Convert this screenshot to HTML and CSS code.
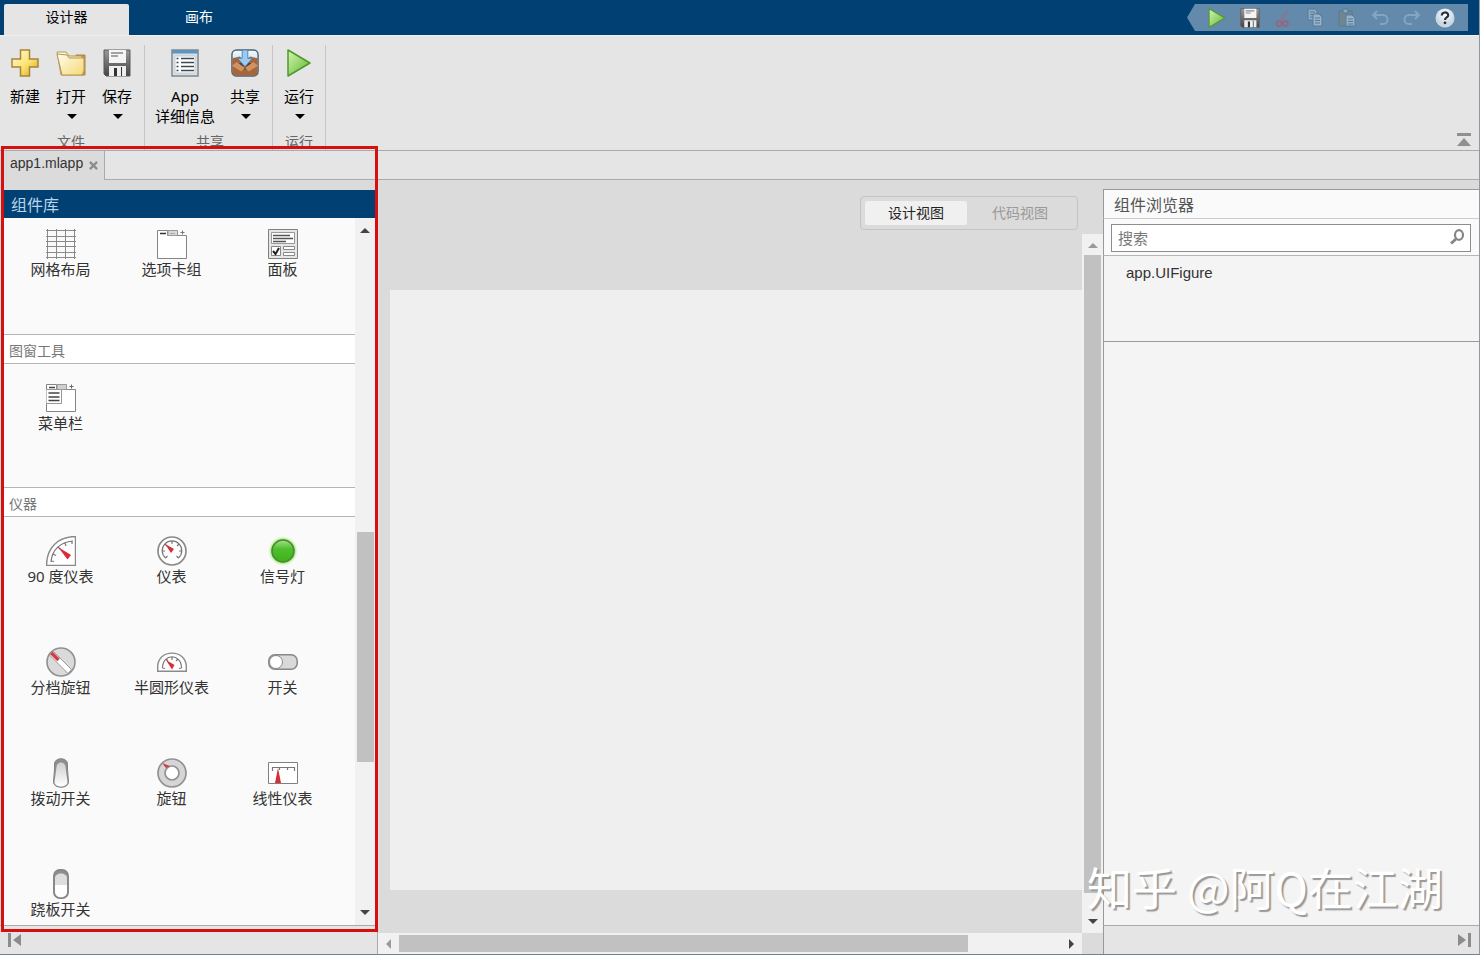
FILE: index.html
```html
<!DOCTYPE html>
<html lang="zh-CN">
<head>
<meta charset="utf-8">
<title>App 设计工具</title>
<link rel="stylesheet" href="styles.css">
</head>
<body>
<svg class="defs" aria-hidden="true">
  <defs>
    <linearGradient id="gold" x1="0" y1="0" x2="1" y2="1"><stop offset="0" stop-color="#fffbe0"/><stop offset=".55" stop-color="#fbe36e"/><stop offset="1" stop-color="#d9a01c"/></linearGradient>
    <linearGradient id="fold" x1="0" y1="0" x2="1" y2="1"><stop offset="0" stop-color="#fffdf0"/><stop offset="1" stop-color="#f5d874"/></linearGradient>
    <linearGradient id="play" x1="0" y1="0" x2="1" y2="1"><stop offset="0" stop-color="#d6f5b4"/><stop offset="1" stop-color="#5cb52a"/></linearGradient>
    <linearGradient id="disk" x1="0" y1="0" x2="0" y2="1"><stop offset="0" stop-color="#9a9a9a"/><stop offset="1" stop-color="#444444"/></linearGradient>
    <linearGradient id="sky" x1="0" y1="0" x2="0" y2="1"><stop offset="0" stop-color="#f4fbff"/><stop offset="1" stop-color="#8fc0e6"/></linearGradient>
    <linearGradient id="metal" x1="0" y1="0" x2="0" y2="1"><stop offset="0" stop-color="#cfcfcf"/><stop offset="1" stop-color="#ffffff"/></linearGradient>
    <linearGradient id="lamp" x1="0" y1="0" x2="0" y2="1"><stop offset="0" stop-color="#a5e08c"/><stop offset=".4" stop-color="#4fc02c"/><stop offset="1" stop-color="#3fb01c"/></linearGradient>
    <radialGradient id="glow"><stop offset=".75" stop-color="#8fe060"/><stop offset="1" stop-color="#d8f8c0" stop-opacity="0"/></radialGradient>
    <radialGradient id="orb" cx=".5" cy=".3"><stop offset="0" stop-color="#ffffff"/><stop offset="1" stop-color="#c9d8e4"/></radialGradient>
    <symbol id="i-play" viewBox="0 0 28 28"><path d="M3 1v26l22-13z" fill="url(#play)" stroke="#4d9a2c" stroke-width="1.5" stroke-linejoin="round"/></symbol>
    <symbol id="i-save" viewBox="0 0 28 28"><path d="M1 1h26v26H3l-2-2z" fill="url(#disk)" stroke="#5a5a5a"/><path d="M6 1h17v13H6z" fill="#f4f4f4"/><path d="M8 4h12M8 7h7" stroke="#888" stroke-width="1.5"/><path d="M6 17h17v10H6z" fill="#eee"/><path d="M11 19h3v8h-3zM18 18h1v9h-1z" fill="#333"/></symbol>
  </defs>
</svg>

<div class="app">
  <header class="titlebar">
    <nav class="main-tabs">
      <button class="main-tab active" type="button">设计器</button>
      <button class="main-tab" type="button">画布</button>
    </nav>
    <div class="quick">
      <button type="button" aria-label="运行"><svg viewBox="0 0 28 28"><use href="#i-play"/></svg></button>
      <button type="button" aria-label="保存"><svg viewBox="0 0 28 28"><use href="#i-save"/></svg></button>
      <button type="button" aria-label="剪切" disabled><svg viewBox="0 0 20 20" fill="none"><path d="M15.500 2L8.500 13M10.500 7l2.500 6" stroke="#8a7590" stroke-width="1.800"/><circle cx="7" cy="15.500" r="2.500" stroke="#96647c" stroke-width="1.700"/><circle cx="13.500" cy="15.500" r="2.500" stroke="#96647c" stroke-width="1.700"/></svg></button>
      <button type="button" aria-label="复制" disabled><svg viewBox="0 0 20 20"><path d="M3 1h7l2 2v9H3z" fill="#8dabc3" stroke="#557a9b"/><path d="M5 4h5M5 6.500h5M5 9h5" stroke="#557a9b"/><path d="M8 6h6l3 3v9H8z" fill="#97b2c8" stroke="#557a9b"/><path d="M10 10h5M10 12.500h5M10 15h5" stroke="#557a9b"/></svg></button>
      <button type="button" aria-label="粘贴" disabled><svg viewBox="0 0 20 20"><path d="M2 3h13v15H2z" fill="#71878f" stroke="#5a7890"/><path d="M6 1h5v4H6z" fill="#8aa6bc" stroke="#557a9b"/><path d="M9 7h6l3 3v8H9z" fill="#97b2c8" stroke="#557a9b"/><path d="M11 11h5M11 13.500h5M11 16h5" stroke="#557a9b"/></svg></button>
      <button type="button" aria-label="撤销" disabled><svg viewBox="0 0 20 20" fill="none" stroke="#82a5c2" stroke-width="2"><path d="M7 3L3 7l4 4M3 7h10c6 0 6 9 0 9h-3"/></svg></button>
      <button type="button" aria-label="重做" disabled><svg viewBox="0 0 20 20" fill="none" stroke="#82a5c2" stroke-width="2"><path d="M13 3l4 4-4 4M17 7H7c-6 0-6 9 0 9h3"/></svg></button>
      <button type="button" aria-label="帮助"><svg viewBox="0 0 20 20"><circle cx="10" cy="10" r="9.500" fill="url(#orb)"/><path d="M6.800 7.600c0-4.200 6.400-4 6.400-.4 0 2.300-3.200 2.300-3.200 4.800" fill="none" stroke="#26303a" stroke-width="2.200"/><circle cx="10" cy="14.800" r="1.400" fill="#26303a"/></svg></button>
    </div>
  </header>

  <section class="ribbon">
    <div class="group group-file">
      <div class="tools">
        <button class="tool" type="button"><svg class="tool-icon" viewBox="0 0 28 28"><path d="M9.500 1h9v9H27v8h-8.500v9h-9v-9H1v-8h8.500z" fill="url(#gold)" stroke="#a8843a" stroke-width="1.500"/></svg><span>新建</span></button>
        <button class="tool" type="button"><svg class="tool-icon wide" viewBox="0 0 30 28"><path d="M20 6h9v20h-4z" fill="#c9962f" stroke="#a8864a"/><path d="M1 3h9l3 4h12l2 2v17H5z" fill="url(#fold)" stroke="#b59655" stroke-linejoin="round"/><path d="M1 5l5 21h20l2-4V9H13l-2-3z" fill="url(#fold)" stroke="#b59655" stroke-linejoin="round"/></svg><span>打开</span><i class="caret"></i></button>
        <button class="tool" type="button"><svg class="tool-icon" viewBox="0 0 28 28"><use href="#i-save"/></svg><span>保存</span><i class="caret"></i></button>
      </div>
      <div class="group-name">文件</div>
    </div>
    <div class="group group-share">
      <div class="tools">
        <button class="tool tool-info" type="button"><svg class="tool-icon" viewBox="0 0 28 28"><path d="M1 1h26v26H1z" fill="#d9dfe3" stroke="#7d8990" stroke-width="1.500"/><path d="M1 1h26v3.500H1z" fill="#5d95bf"/><path d="M4 7h20v17H4z" fill="#fff" stroke="#c2cbd0"/><path d="M5.500 9.500h2M5.500 13.500h2M5.500 17.500h2M5.500 21.500h2M10 9.500h13M10 13.500h13M10 17.500h13M10 21.500h13" stroke="#3f4a50" stroke-width="1.700"/></svg><span>App<br>详细信息</span></button>
        <button class="tool tool-share" type="button"><svg class="tool-icon wide" viewBox="0 0 30 30"><rect x="1" y="1" width="28" height="28" rx="5" fill="url(#sky)" stroke="#4b6175" stroke-width="1.500"/><path d="M1.500 10l8-2 5 5 6-5 8 2v14q0 4.500-5 4.500H6.500q-5 0-5-4.500z" fill="#a7663a"/><path d="M2 18l13-5 13 5-13 4z" fill="#5d351e"/><path d="M1 18l5-4 9 6-4 4zM29 18l-5-4-9 6 4 4z" fill="#cf9262"/><path d="M12 1h6v9h5l-8 9-8-9h5z" fill="#9ccaf0" stroke="#4e83b3"/></svg><span>共享</span><i class="caret"></i></button>
      </div>
      <div class="group-name">共享</div>
    </div>
    <div class="group group-run">
      <div class="tools">
        <button class="tool" type="button"><svg class="tool-icon" viewBox="0 0 28 28"><use href="#i-play"/></svg><span>运行</span><i class="caret"></i></button>
      </div>
      <div class="group-name">运行</div>
    </div>
    <button class="collapse" type="button" aria-label="最小化工具条"><svg viewBox="0 0 14 14" fill="#8f8f8f"><path d="M0 0h14v3H0zM7 5l7 8H0z"/></svg></button>
  </section>

  <div class="doc-tabs">
    <div class="doc-tab"><span>app1.mlapp</span><button type="button" aria-label="关闭"><svg viewBox="0 0 10 10" stroke="#8c8c8c" stroke-width="2.500"><path d="M1 1l8 8M9 1L1 9"/></svg></button></div>
    <div class="doc-rest"></div>
  </div>

  <main class="workspace">
    <aside class="library">
      <h2 class="library-title">组件库</h2>
      <div class="library-body">
        <div class="palette">
          <div class="items items-first">
            <button class="item" type="button"><svg viewBox="0 0 30 30" fill="none" stroke="#8a8a8a"><path d="M1.500 0v30M10.500 0v30M19.500 0v30M28.500 0v30M0 1.500h30M0 7.500h30M0 12.500h30M0 17.500h30M0 23.500h30M0 28.500h30"/></svg><span>网格布局</span></button>
            <button class="item" type="button"><svg viewBox="0 0 30 30"><path d="M.5 1.500h10v5h19v23H.5z" fill="#fff" stroke="#858585"/><path d="M11 1.500h9.500v5H11z" fill="#d8d8d8" stroke="#999"/><path d="M3 4.500h6" stroke="#333" stroke-width="1.500"/><path d="M13 4.500h5" stroke="#aaa"/><path d="M25.500 1.500v4M23.500 3.500h4" stroke="#777"/></svg><span>选项卡组</span></button>
            <button class="item" type="button"><svg viewBox="0 0 30 30"><path d="M.5.5h29v29H.5z" fill="#e6e6e6" stroke="#808080"/><path d="M3.500 3.500h23v11h-23z" fill="#fff" stroke="#999"/><path d="M5 6.500h17M5 9.500h20M5 12.500h13" stroke="#555" stroke-width="1.500"/><path d="M3.500 17.500h9v9h-9zM15.500 17.500h11v3h-11zM15.500 23.500h11v3h-11z" fill="#fff" stroke="#888"/><path d="M5 22l2.500 3L11 19" stroke="#222" stroke-width="2" fill="none"/></svg><span>面板</span></button>
          </div>
          <h3 class="section">图窗工具</h3>
          <div class="items">
            <button class="item" type="button"><svg viewBox="0 0 30 30"><path d="M.5 1.500h10v5h19v22H.5z" fill="#fff" stroke="#858585"/><path d="M11 1.500h9.500v5H11z" fill="#d0d0d0" stroke="#999"/><path d="M.5 6.500h15v14H.5" fill="#fff" stroke="#999"/><path d="M3 4.500h6M2.500 10h11M2.500 14h11M2.500 17.500h11" stroke="#444" stroke-width="1.500"/><path d="M25.500 1.500v4M23.500 3.500h4" stroke="#666"/></svg><span>菜单栏</span></button>
          </div>
          <h3 class="section">仪器</h3>
          <div class="items">
            <button class="item" type="button"><svg viewBox="0 0 30 30"><path d="M.5 29.500C.5 12 12 .5 29.500.5v29z" fill="#fff" stroke="#8a8a8a" stroke-width="1.400"/><path d="M5 26C6 14 14 6 27 5M5 25l3 .5M7 18l3 1.500M12 11l2.500 2.500M19 7l1 3M26 5v3" fill="none" stroke="#777" stroke-width="1.200"/><path d="M12 11l13 8-3.500 4.500z" fill="#d92b38"/></svg><span>90 度仪表</span></button>
            <button class="item" type="button"><svg viewBox="0 0 30 30"><circle cx="15" cy="15" r="14" fill="#fff" stroke="#8a8a8a" stroke-width="1.700"/><path d="M8.500 22a9.800 9.800 0 1 1 13 0M5 15h3M22 15h3M15 5v3M8 8l2 2M22 8l-2 2M8.500 22l2-2M21.500 22l-2-2" fill="none" stroke="#777" stroke-width="1.200"/><path d="M8 8l9 5-3 4z" fill="#d92b38"/></svg><span>仪表</span></button>
            <button class="item" type="button"><svg viewBox="0 0 30 30"><circle cx="15" cy="15" r="15" fill="url(#glow)"/><circle cx="15" cy="15" r="11" fill="url(#lamp)" stroke="#4a8a35" stroke-width="1.500"/></svg><span>信号灯</span></button>
            <button class="item" type="button"><svg viewBox="0 0 30 30"><circle cx="15" cy="15" r="14" fill="#dadada" stroke="#909090" stroke-width="1.600"/><path d="M7.500 4.500l18 18-3.500 4-18-18z" fill="#fff" stroke="#999"/><path d="M5.500 6l7 7" stroke="#d43b45" stroke-width="3.500"/></svg><span>分档旋钮</span></button>
            <button class="item" type="button"><svg viewBox="0 0 30 30"><path d="M.7 24.300V20C.7 1.500 29.300 1.500 29.300 20v4.300z" fill="#fff" stroke="#8a8a8a" stroke-width="1.400"/><path d="M5.500 21c0-15 19-15 19 0M5.500 21l2.500.5M15 10v3M9 12l2 2M21 12l-2 2M24.500 21l-2.500.5" fill="none" stroke="#777" stroke-width="1.200"/><path d="M9 13l8.500 5-2.500 4.500z" fill="#d92b38"/></svg><span>半圆形仪表</span></button>
            <button class="item" type="button"><svg viewBox="0 0 30 30"><rect x=".8" y="7.800" width="28.400" height="14.400" rx="6" fill="#d9d9d9" stroke="#888" stroke-width="1.500"/><circle cx="8" cy="15" r="6.500" fill="#fff" stroke="#888"/></svg><span>开关</span></button>
            <button class="item" type="button"><svg viewBox="0 0 30 30"><path d="M8.500 6c0-7 13-7 13 0v5l1 13c0 7-15 7-15 0l1-13z" fill="#8e8e8e" stroke="#858585"/><path d="M10.500 9c0-6 9-6 9 0l2 15c0 6-13 6-13 0z" fill="url(#metal)"/></svg><span>拨动开关</span></button>
            <button class="item" type="button"><svg viewBox="0 0 30 30"><circle cx="15" cy="15" r="14" fill="#d6d6d6" stroke="#929292" stroke-width="1.700"/><circle cx="15" cy="15" r="7" fill="#fff" stroke="#929292" stroke-width="1.700"/><path d="M5 5l8 3-4 2z" fill="#d43b45"/></svg><span>旋钮</span></button>
            <button class="item" type="button"><svg viewBox="0 0 30 30"><path d="M.5 4.500h29v21H.5z" fill="#fff" stroke="#808080"/><path d="M4 9.500h23M4.500 9v4M11.500 9v3M19.500 9v3M26.500 9v4" stroke="#777" stroke-width="1.200"/><path d="M10 10l3 15H7z" fill="#d92b38"/></svg><span>线性仪表</span></button>
            <button class="item" type="button"><svg viewBox="0 0 30 30"><rect x="7.800" y=".8" width="14.400" height="28.400" rx="6" fill="#8e8e8e" stroke="#858585" stroke-width="1.500"/><path d="M9 16V9c0-6 12-6 12 0v7z" fill="#dedede"/><path d="M9 16h12v7c0 7-12 7-12 0z" fill="#fff"/></svg><span>跷板开关</span></button>
          </div>
        </div>
        <div class="vscroll"><i class="arrow up"></i><div class="track"><div class="thumb thumb-library"></div></div><i class="arrow down"></i></div>
      </div>
      <div class="panel-foot"><button type="button" aria-label="折叠组件库"><svg viewBox="0 0 14 14" fill="#8c8c8c"><path d="M0 0h3v14H0zM13 1v12L5 7z"/></svg></button></div>
    </aside>

    <section class="editor">
      <div class="view-bar">
        <div class="view-toggle"><button class="on" type="button">设计视图</button><button type="button">代码视图</button></div>
      </div>
      <div class="stage-row">
        <div class="stage"><div class="canvas"></div></div>
        <div class="vscroll vscroll-stage"><i class="arrow up faint"></i><div class="track"><div class="thumb"></div></div><i class="arrow down"></i></div>
      </div>
      <div class="hscroll-row">
        <div class="hscroll"><i class="arrow left faint"></i><div class="track"><div class="thumb"></div></div><i class="arrow right"></i></div>
      </div>
    </section>

    <aside class="browser">
      <h2 class="browser-title">组件浏览器</h2>
      <div class="search">
        <input type="text" placeholder="搜索" aria-label="搜索">
        <svg viewBox="0 0 16 16" fill="none" stroke="#858585"><ellipse cx="10" cy="6" rx="4" ry="4.800" stroke-width="2.200"/><path d="M7 10l-5 4.500" stroke-width="3"/></svg>
      </div>
      <div class="tree">app.UIFigure</div>
      <div class="browser-rest"></div>
      <div class="panel-foot panel-foot-right"><button type="button" aria-label="折叠组件浏览器"><svg viewBox="0 0 14 14" fill="#8c8c8c"><path d="M11 0h3v14h-3zM1 1v12l8-6z"/></svg></button></div>
    </aside>
  </main>
  <div class="highlight"></div>
  <div class="watermark">知乎 @阿Q在江湖</div>
</div>
</body>
</html>
```
FILE: styles.css
```css
* { box-sizing: border-box; }
body {
  margin: 0;
  font-family: "Noto Sans", "Noto Sans CJK SC", sans-serif;
  font-size: 15px;
  line-height: 20px;
  color: #333;
  background: #dbdbdb;
}
button { margin: 0; padding: 0; border: 0; background: none; font: inherit; color: inherit; }
h2, h3 { margin: 0; font-weight: 400; }
svg { display: block; }
.defs { position: absolute; width: 0; height: 0; }

.app {
  position: relative;
  display: flex;
  flex-direction: column;
  height: 100vh;
  border-right: 1px solid #8d9aa4;
  border-bottom: 1px solid #6d8290;
  overflow: hidden;
}

/* Title bar */
.titlebar {
  display: flex;
  justify-content: space-between;
  flex: none;
  height: 35px;
  padding: 4px 11px 0 4px;
  background: #004073;
}
.main-tabs { display: flex; }
.main-tab { width: 125px; padding-bottom: 6px; font-size: 14px; color: #fff; }
.main-tab + .main-tab { width: 140px; }
.main-tab.active { color: #000; background: #e5e5e5; border-radius: 2px 2px 0 0; }
.quick {
  display: flex;
  align-items: center;
  justify-content: space-between;
  width: 281px;
  height: 27px;
  padding: 0 13px 0 20px;
  background: #648aab;
  clip-path: polygon(8px 0, 100% 0, 100% 100%, 8px 100%, 0 50%);
}
.quick svg { width: 20px; height: 20px; }

/* Ribbon */
.ribbon {
  display: flex;
  flex: none;
  height: 116px;
  padding-top: 9px;
  background: #e5e5e5;
  border-top: 1px solid #f0f0f0;
  border-bottom: 1px solid #aaa;
  overflow: hidden;
}
.group { display: flex; flex-direction: column; border-right: 1px solid #c6c6c6; overflow: hidden; }
.group-file { padding: 0 4px 0 2px; }
.group-share { padding: 0 2px 0 5px; }
.group-run { padding: 0 3px; }
.tools { display: flex; align-items: flex-start; flex: none; height: 87px; }
.tool { display: flex; flex-direction: column; align-items: center; width: 46px; padding-top: 4px; color: #000; }
.tool-info { width: 70px; }
.tool-share { width: 50px; }
.tool-icon { flex: none; width: 28px; height: 28px; margin-bottom: 9px; }
.tool-icon.wide { width: 30px; }
.caret { margin: 8px 0 0 2px; border: 5px solid transparent; border-top-color: #000; border-bottom: 0; }
.group-name { flex: none; font-size: 14px; text-align: center; color: #666; }
.collapse { margin: auto 8px 3px auto; }
.collapse svg { width: 14px; height: 14px; }

/* Document tabs */
.doc-tabs { display: flex; flex: none; height: 29px; font-family: "Liberation Sans", sans-serif; }
.doc-tab { display: flex; align-items: center; gap: 6px; width: 105px; padding: 0 0 5px 10px; font-size: 14px; border-right: 1px solid #aaa; }
.doc-tab svg { width: 9px; height: 9px; margin-top: 4px; }
.doc-rest { flex: 1; background: #e5e5e5; border-bottom: 1px solid #aaa; }

/* Workspace */
.workspace { display: grid; grid-template-columns: 378px minmax(0, 1fr) 376px; flex: 1; min-height: 0; }

.library { display: flex; flex-direction: column; min-height: 0; padding-top: 10px; border-right: 1px solid #aaa; }
.library-title { flex: none; height: 28px; margin: 0 2px 0 4px; padding: 5px 7px 0; font-size: 16px; color: #b8d4ea; background: #004073; }
.library-body { display: flex; flex: 1; min-height: 0; margin: 0 2px 0 4px; background: #fafafa; }
.palette { flex: 1; overflow: hidden; }
.items { display: grid; grid-template-columns: repeat(3, 111px); grid-auto-rows: 111px; padding: 11px 0 1px 1px; }
.items-first { padding: 3px 0 2px 1px; }
.item { display: flex; flex-direction: column; align-items: center; padding-top: 8px; white-space: nowrap; }
.item svg { flex: none; width: 30px; height: 30px; }
.section { height: 30px; padding: 6px 5px 0; font-size: 14px; color: #777; background: #fff; border: 1px solid #b5b5b5; border-width: 1px 0; }
.panel-foot { flex: none; height: 29px; padding: 7px 8px; background: #e5e5e5; border-top: 1px solid #aaa; line-height: 0; }
.panel-foot svg { width: 14px; height: 14px; }
.panel-foot-right { display: flex; justify-content: flex-end; }

/* Scroll bars */
.vscroll { display: flex; flex-direction: column; align-items: center; flex: none; width: 20px; padding: 10px 0; background: #f1f1f1; }
.track { flex: 1; min-height: 0; }
.thumb { height: 100%; background: #c1c1c1; }
.vscroll .track { width: 17px; margin: 10px 0; }
.thumb-library { height: 35%; margin-top: 289px; }
.arrow { flex: none; border: 5px solid transparent; }
.arrow.up { border-top: 0; border-bottom-color: #444; }
.arrow.down { border-bottom: 0; border-top-color: #444; }
.arrow.left { border-left: 0; border-right-color: #444; }
.arrow.right { border-right: 0; border-left-color: #444; }
.arrow.up.faint { border-bottom-color: #9a9a9a; }
.arrow.left.faint { border-right-color: #9a9a9a; }

/* Editor */
.editor { display: flex; flex-direction: column; min-width: 0; min-height: 0; }
.view-bar { display: flex; justify-content: flex-end; flex: none; padding: 16px 25px 4px; }
.view-toggle { display: flex; width: 218px; height: 34px; padding: 4px; border: 1px solid #c4c4c4; border-radius: 4px; }
.view-toggle button { flex: 1; font-size: 14px; color: #999; border-radius: 2px; }
.view-toggle .on { flex: 0 0 102px; color: #222; background: #f0f0f0; }
.stage-row { display: flex; flex: 1; min-height: 0; }
.stage { display: flex; flex: 1; padding: 56px 0 43px 12px; }
.canvas { flex: 1; background: #efefef; }
.vscroll-stage { width: 21px; padding: 9px 0; }
.vscroll-stage .track { margin: 7px 0 26px; }
.hscroll-row { flex: none; padding-right: 21px; }
.hscroll { display: flex; align-items: center; height: 21px; padding: 0 8px; background: #f1f1f1; }
.hscroll .track { height: 17px; margin: 0 8px; }
.hscroll .thumb { width: 86%; }

/* Component browser */
.browser { display: flex; flex-direction: column; min-height: 0; padding-top: 9px; }
.browser > * { border-left: 1px solid #999; }
.browser-title { flex: none; height: 30px; padding: 5px 10px 0; font-size: 16px; color: #555; background: #fafafa; border-top: 1px solid #999; border-bottom: 1px solid #ccc; }
.search { position: relative; flex: none; height: 37px; padding: 5px 8px 3px 7px; background: #fafafa; border-bottom: 1px solid #b5b5b5; }
.search input { display: block; width: 100%; height: 28px; padding: 0 30px 0 6px; font: inherit; color: #333; background: #fff; border: 1px solid #8d8d8d; border-radius: 0; }
.search input::placeholder { color: #777; opacity: 1; }
.search svg { position: absolute; right: 14px; top: 10px; width: 16px; height: 16px; }
.tree { flex: none; height: 86px; padding: 7px 22px; font-family: "Liberation Sans", sans-serif; background: #f4f4f4; border-bottom: 1px solid #999; }
.browser-rest { flex: 1; background: #f4f4f4; }

/* Overlays */
.highlight { position: absolute; left: 1px; top: 146px; width: 377px; bottom: 22px; border: 3px solid #d7100f; pointer-events: none; }
.watermark {
  position: absolute;
  right: 36px;
  bottom: 37px;
  font: 45px/60px "Noto Sans CJK SC", sans-serif;
  color: #fff;
  text-shadow: 2px 2px 1px #999;
  white-space: nowrap;
  pointer-events: none;
}
```
